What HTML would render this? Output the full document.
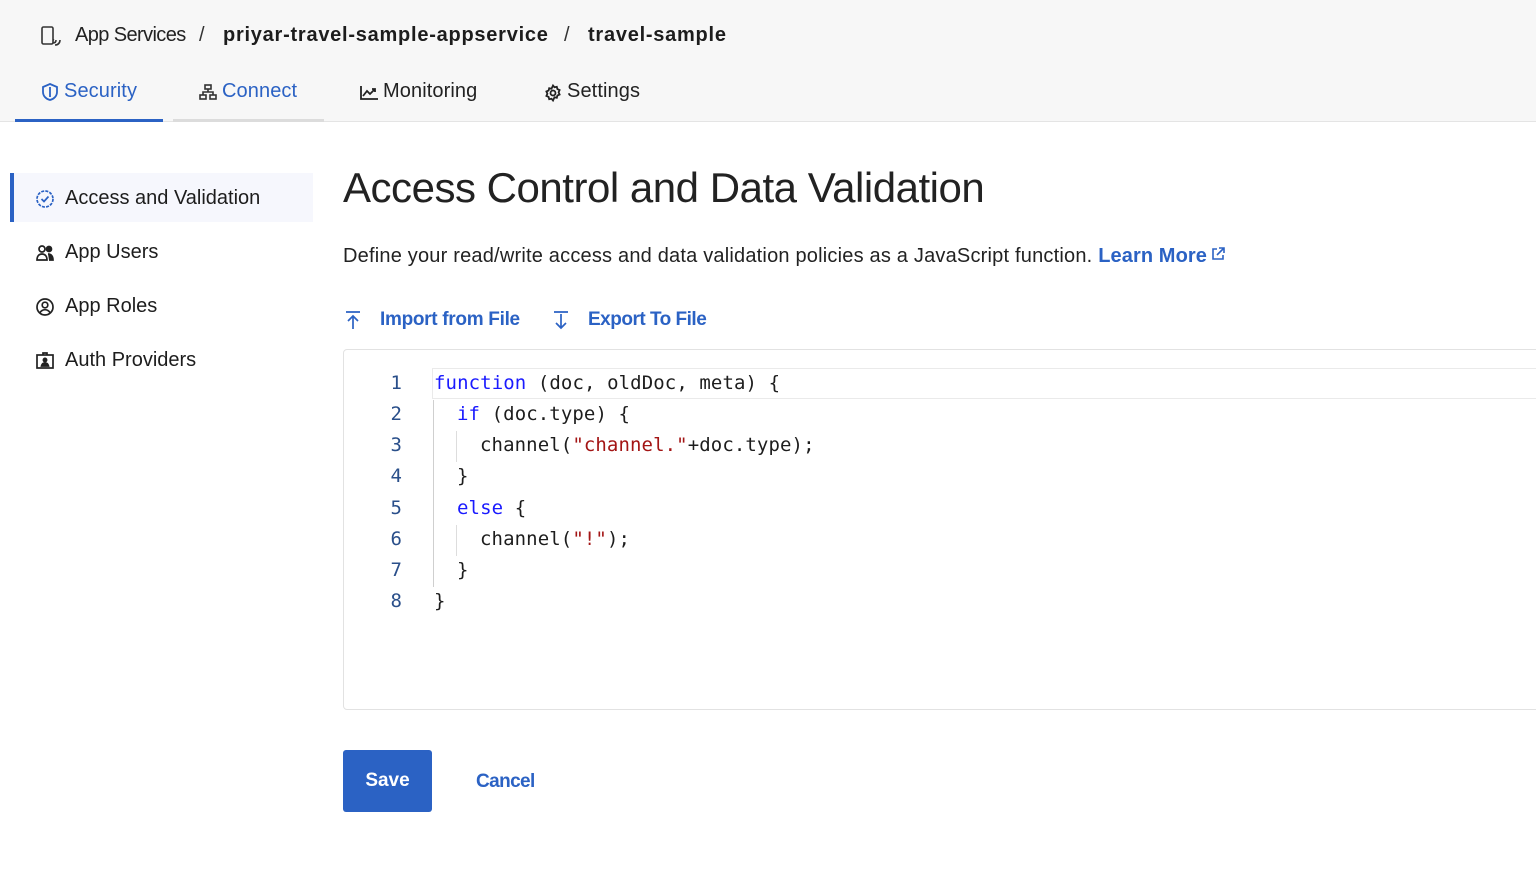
<!DOCTYPE html>
<html><head><meta charset="utf-8"><style>
*{margin:0;padding:0;box-sizing:border-box}
body{width:1536px;height:883px;overflow:hidden;background:#fff;font-family:"Liberation Sans",sans-serif;color:#1d1d1d;position:relative}
.hdr{position:absolute;left:0;top:0;width:1536px;height:122px;background:#f7f7f7;border-bottom:1px solid #e4e4e4}
.abs{position:absolute;white-space:nowrap}
.crumb{top:24px;font-size:20px;letter-spacing:-0.3px}
.tab{top:80px;font-size:20px;letter-spacing:0.1px;display:flex;align-items:center;gap:4px}
.blue{color:#2b62c4}
.side{font-size:20px;letter-spacing:0px;left:35px;display:flex;align-items:center;gap:10px}
.code{font-family:"DejaVu Sans Mono",monospace;font-size:19px;letter-spacing:0.1px}
.ln{position:absolute;left:380px;width:22px;text-align:right;color:#2a4f8a;font-family:"DejaVu Sans Mono",monospace;font-size:19px}
.kw{color:#1a1aff}.st{color:#a31515}
</style></head><body>
<div class="hdr"></div>
<svg class="abs" style="left:40px;top:25px" width="22" height="22" viewBox="0 0 22 22" fill="none" stroke="#333" stroke-width="1.6"><rect x="2" y="2" width="11" height="17" rx="1.5"/><path d="M13 18c2 0 3-1 3-3M13 15a1 1 0 0 1 1 0M15 20c3 0 5-2 5-5"/></svg>
<div class="abs crumb" style="left:75px;color:#222;letter-spacing:-0.6px">App Services</div>
<div class="abs crumb" style="left:199px;color:#333">/</div>
<div class="abs crumb" style="left:223px;font-weight:bold;letter-spacing:0.75px">priyar-travel-sample-appservice</div>
<div class="abs crumb" style="left:564px;color:#333">/</div>
<div class="abs crumb" style="left:588px;font-weight:bold;letter-spacing:0.75px">travel-sample</div>

<div class="abs tab blue" style="left:40px"><svg width="20" height="20" viewBox="0 0 20 20" fill="none" stroke="#2b62c4" stroke-width="1.8"><path d="M10 2l7 3v5c0 4-3 7-7 8-4-1-7-4-7-8V5z"/><path d="M10 5v10" /></svg>Security</div>
<div class="abs" style="left:15px;top:119px;width:148px;height:3px;background:#2b62c4"></div>
<div class="abs" style="left:173px;top:119px;width:151px;height:3px;background:#dcdcdc"></div>
<div class="abs tab blue" style="left:198px"><svg width="20" height="20" viewBox="0 0 20 20" fill="none" stroke="#333" stroke-width="1.6"><rect x="7" y="3" width="6" height="4"/><rect x="2" y="13" width="6" height="4"/><rect x="12" y="13" width="6" height="4"/><path d="M10 7v3M5 13v-3h10v3"/></svg>Connect</div>
<div class="abs tab" style="left:359px;color:#222"><svg width="20" height="20" viewBox="0 0 20 20" fill="none" stroke="#222" stroke-width="1.8"><path d="M2 4v13h17M4 14l4-5 3 3 5-5M13 7h3v3"/></svg>Monitoring</div>
<div class="abs tab" style="left:543px;color:#222"><svg width="20" height="20" viewBox="0 0 20 20" fill="none" stroke="#222" stroke-width="1.8"><circle cx="10" cy="11" r="2.5"/><path d="M10 3.5l1.5 1.8 2.3-.5.6 2.3 2.2 1-1 2.2 1 2.2-2.2 1-.6 2.3-2.3-.5L10 18.5l-1.5-1.8-2.3.5-.6-2.3-2.2-1 1-2.2-1-2.2 2.2-1 .6-2.3 2.3.5z"/></svg>Settings</div>

<div class="abs" style="left:10px;top:173px;width:303px;height:49px;background:#f6f7fd;border-left:4px solid #2b62c4"></div>
<div class="abs side" style="top:187px"><svg width="20" height="20" viewBox="0 0 20 20" fill="none" stroke="#2b62c4" stroke-width="1.7"><circle cx="10" cy="10" r="8" stroke-dasharray="3 1.2"/><path d="M6.5 10l2.5 2.5 4.5-5"/></svg>Access and Validation</div>
<div class="abs side" style="top:241px"><svg width="20" height="20" viewBox="0 0 20 20" fill="none" stroke="#222" stroke-width="1.7"><circle cx="7" cy="6" r="3"/><path d="M2 17c0-4 2-6 5-6s5 2 5 6z"/><circle cx="14" cy="6" r="2.5" fill="#222"/><path d="M13 11c3 0 5 2 5 6h-4" fill="#222"/></svg>App Users</div>
<div class="abs side" style="top:295px"><svg width="20" height="20" viewBox="0 0 20 20" fill="none" stroke="#222" stroke-width="1.7"><circle cx="10" cy="10" r="8"/><circle cx="10" cy="8" r="2.8"/><path d="M5 15.5c1.5-2 3-2.8 5-2.8s3.5.8 5 2.8"/></svg>App Roles</div>
<div class="abs side" style="top:349px"><svg width="20" height="20" viewBox="0 0 20 20" fill="none" stroke="#222" stroke-width="1.7"><rect x="2" y="4" width="16" height="13"/><path d="M8 4V2h4v2"/><circle cx="10" cy="9" r="1.6" fill="#222"/><path d="M6.5 15c.5-2 2-3 3.5-3s3 1 3.5 3z" fill="#222"/></svg>Auth Providers</div>

<div class="abs" style="left:343px;top:164px;font-size:42px;color:#222;letter-spacing:-0.48px">Access Control and Data Validation</div>
<div class="abs" style="left:343px;top:245px;font-size:20px;color:#222;letter-spacing:0.2px">Define your read/write access and data validation policies as a JavaScript function. <span class="blue" style="font-weight:bold;letter-spacing:0.1px">Learn More</span><svg width="16" height="16" viewBox="0 0 16 16" fill="none" stroke="#2b62c4" stroke-width="1.6" style="margin-left:3px"><path d="M7 3H3v10h10V9M9 2h5v5M14 2L7 9"/></svg></div>

<div class="abs blue" style="left:343px;top:309px;font-size:19px;font-weight:bold;letter-spacing:-0.3px;display:flex;align-items:center"><svg width="20" height="22" viewBox="0 0 20 22" fill="none" stroke="#2b62c4" stroke-width="1.7"><path d="M3 3h14M10 20V7M5 12l5-5 5 5"/></svg><span style="margin-left:17px">Import from File</span></div>
<div class="abs blue" style="left:551px;top:309px;font-size:19px;font-weight:bold;letter-spacing:-0.5px;display:flex;align-items:center"><svg width="20" height="22" viewBox="0 0 20 22" fill="none" stroke="#2b62c4" stroke-width="1.7"><path d="M3 3h14M10 5v14M5 14l5 5 5-5"/></svg><span style="margin-left:17px">Export To File</span></div>

<div class="abs" style="left:343px;top:349px;width:1200px;height:361px;border:1px solid #e2e2e2;border-radius:4px"></div>
<div class="abs" style="left:432px;top:368px;width:1110px;height:31px;border:1px solid #eaeaea;border-right:none"></div>
<div class="abs" style="left:433px;top:400px;width:1px;height:187px;background:#cfcfcf"></div>
<div class="abs" style="left:456px;top:431px;width:1px;height:31px;background:#ddd"></div>
<div class="abs" style="left:456px;top:525px;width:1px;height:31px;background:#ddd"></div>
<div class="ln" style="top:372px">1</div><div class="ln" style="top:403px">2</div><div class="ln" style="top:434px">3</div><div class="ln" style="top:465px">4</div><div class="ln" style="top:497px">5</div><div class="ln" style="top:528px">6</div><div class="ln" style="top:559px">7</div><div class="ln" style="top:590px">8</div>
<div class="abs code" style="left:434px;top:372px"><span class="kw">function</span> (doc, oldDoc, meta) {</div>
<div class="abs code" style="left:457px;top:403px"><span class="kw">if</span> (doc.type) {</div>
<div class="abs code" style="left:480px;top:434px">channel(<span class="st">"channel."</span>+doc.type);</div>
<div class="abs code" style="left:457px;top:465px">}</div>
<div class="abs code" style="left:457px;top:497px"><span class="kw">else</span> {</div>
<div class="abs code" style="left:480px;top:528px">channel(<span class="st">"!"</span>);</div>
<div class="abs code" style="left:457px;top:559px">}</div>
<div class="abs code" style="left:434px;top:590px">}</div>

<div class="abs" style="left:343px;top:750px;width:89px;height:62px;background:#2b62c4;border-radius:3px;color:#fff;font-size:19px;font-weight:bold;text-align:center;line-height:62px">Save</div>
<div class="abs blue" style="left:476px;top:771px;font-size:19px;font-weight:bold;letter-spacing:-0.6px">Cancel</div>
</body></html>
